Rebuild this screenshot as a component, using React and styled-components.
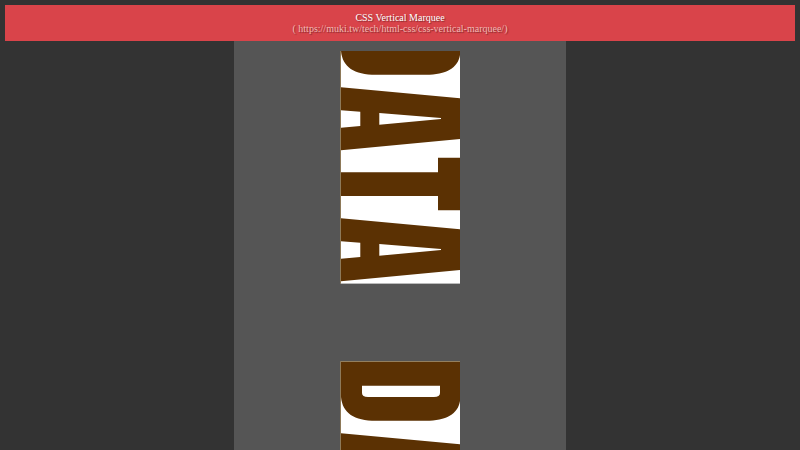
import React from "react";
import styled, { createGlobalStyle } from "styled-components";

const GlobalStyle = createGlobalStyle`
  * { box-sizing: border-box; }
  body {
    margin: 0;
    background: #333;
    font-family: "Liberation Serif", "Times New Roman", serif;
  }
`;

const Page = styled.div`
  display: flex;
  flex-direction: column;
  align-items: center;
  height: 100vh;
  padding: 5px 5px 0;
  overflow: hidden;
`;

const Header = styled.header`
  width: 100%;
  padding: 7px;
  background: #d9444a;
  color: #fff;
  font-size: 10px;
  line-height: 11px;
  text-align: center;
  text-shadow: 1px 1px 1px rgba(0, 0, 0, 0.4);
`;

const Title = styled.h1`
  margin: 0;
  font-size: inherit;
  font-weight: normal;
`;

const SourceLink = styled.a`
  display: block;
  color: #f3b8b4;
  text-decoration: none;
`;

const Panel = styled.main`
  flex: 1;
  display: flex;
  flex-direction: column;
  align-items: center;
  width: 42%;
  min-height: 0;
  padding-top: 10px;
  background: #555;
`;

const Marquee = styled.div`
  flex: 1;
  min-height: 0;
  overflow: hidden;
`;

const Track = styled.div`
  display: flex;
  flex-direction: column;
  gap: 77px;
  margin-top: -36px;
`;

const Banner = styled.svg`
  display: block;
  flex: none;
  width: 120px;
  height: 269px;
`;

const LETTER_D =
  "M1 1H120V40C118 53 106 59.8 86 59.8H36C14 59.8 2.5 52 1 36ZM22 24.7V32Q22 36 28 36H94Q100 36 100 32V24.7Z";
const LETTER_A =
  "M1 72.2L120 83.3V124L1 135.2V112.7L20.3 111V96.7L1 95.3ZM39.3 98V109.7L101 104V103Z";
const LETTER_T = "M1 157.3H98V142.7H120V195.3H98V181H1Z";

function DataBanner() {
  return (
    <Banner viewBox="0 0 120 269" role="img" aria-label="DATA">
      <rect x="0.6" y="0.4" width="119.4" height="268.2" fill="#fff" />
      <g fill="#5b3103" fillRule="evenodd">
        <path d={LETTER_D} />
        <path d={LETTER_A} />
        <path d={LETTER_T} />
        <path d={LETTER_A} transform="translate(0 131)" />
      </g>
      <path d="M0.5 268.5V0.5H120" fill="none" stroke="#8a7048" strokeOpacity="0.8" />
    </Banner>
  );
}

export default function App() {
  return (
    <Page>
      <GlobalStyle />
      <Header>
        <Title>CSS Vertical Marquee</Title>
        <SourceLink href="https://muki.tw/tech/html-css/css-vertical-marquee/">
          ( https://muki.tw/tech/html-css/css-vertical-marquee/)
        </SourceLink>
      </Header>
      <Panel>
        <Marquee>
          <Track>
            <DataBanner />
            <DataBanner />
          </Track>
        </Marquee>
      </Panel>
    </Page>
  );
}
